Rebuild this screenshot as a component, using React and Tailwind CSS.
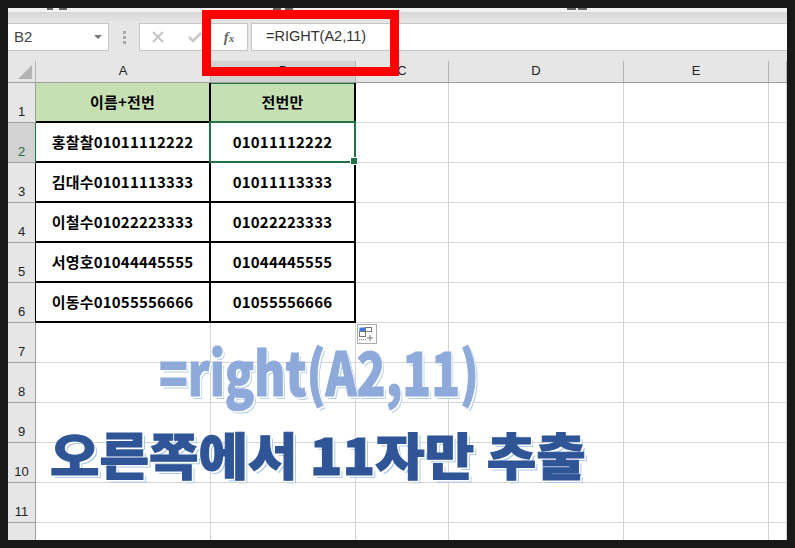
import React from 'react';

const uiFont = "font-['Liberation_Sans','Noto_Sans_CJK_KR',sans-serif]";

// column widths of the sheet
const columns = [
  { label: 'A', width: 'w-[175px]' },
  { label: 'B', width: 'w-[145px]', active: true },
  { label: 'C', width: 'w-[93px]' },
  { label: 'D', width: 'w-[175px]' },
  { label: 'E', width: 'w-[145px]' },
  { label: '', width: 'flex-1' },
];

const rows = [
  ['이름+전번', '전번만'],
  ['홍찰찰01011112222', '01011112222'],
  ['김대수01011113333', '01011113333'],
  ['이철수01022223333', '01022223333'],
  ['서영호01044445555', '01044445555'],
  ['이동수01055556666', '01055556666'],
  ['', ''],
  ['', ''],
  ['', ''],
  ['', ''],
  ['', ''],
  ['', ''],
];

// bits of the ribbon text that show at the very top
const ribbonBits = ['left-[39px] w-[6px]', 'left-[51px] w-[8px]', 'left-[265px] w-[8px]', 'left-[277px] w-[8px]', 'left-[559px] w-[9px]', 'left-[570px] w-[9px]'];

function FormulaBar() {
  return (
    <div className="h-[28px] flex items-stretch bg-[#e6e6e6]">
      <div className="w-[101px] bg-white border border-l-0 border-[#c6c6c6] flex items-center justify-between pl-[6px] pr-[6px]">
        <span className="text-[15px] text-[#444]">B2</span>
        <span className="w-0 h-0 border-x-[4px] border-x-transparent border-t-[4px] border-t-[#777]" />
      </div>
      <div className="w-[30px] flex flex-col items-center justify-center gap-[2px]">
        <span className="w-[3px] h-[3px] bg-[#aaa]" />
        <span className="w-[3px] h-[3px] bg-[#aaa]" />
        <span className="w-[3px] h-[3px] bg-[#aaa]" />
      </div>
      <div className="w-[72px] bg-white border border-r-0 border-[#c6c6c6] flex items-center pl-[12px] gap-[24px]">
        <svg width="12" height="12" viewBox="0 0 12 12" fill="none" stroke="#c4c4c4" strokeWidth="2">
          <path d="M1 1l10 10M11 1L1 11" />
        </svg>
        <svg width="14" height="12" viewBox="0 0 14 12" fill="none" stroke="#c8c8c8" strokeWidth="2.5">
          <path d="M1 6l4 4 8-8" />
        </svg>
      </div>
      <div className="w-[37px] bg-white border border-l-0 border-[#c6c6c6] flex items-center justify-center">
        <span className="font-['Liberation_Serif',serif] italic font-bold text-[15px] text-[#666]">
          f<span className="text-[11px]">x</span>
        </span>
      </div>
      <div className="w-[3px]" />
      <div className="flex-1 bg-white border-y border-l border-[#c6c6c6] pl-[14px] flex items-center text-[14.5px] text-[#333]">
        =RIGHT(A2,11)
      </div>
    </div>
  );
}

function ColumnHeader() {
  return (
    <div className="h-[32px] flex items-end bg-[#e6e6e6] border-b border-[#9f9f9f]">
      <div className="w-[28px] h-[21px] flex items-end justify-end border-r border-[#b4b4b4]">
        <span className="mr-[3px] mb-[3px] w-0 h-0 border-l-[14px] border-l-transparent border-b-[14px] border-b-[#b4b4b4]" />
      </div>
      {columns.map((col, i) => (
        <div
          key={i}
          className={`${col.width} h-[21px] pb-[2px] flex items-center justify-center text-[13px] text-[#222] border-r border-[#b4b4b4] ${col.active ? 'bg-[#d2d2d2]' : ''}`}
        >
          {col.label}
        </div>
      ))}
    </div>
  );
}

function SheetRow({ index, cells }) {
  const inTable = index < 6;
  const isHead = index === 0;
  const isActive = index === 1;

  let headBorder = 'border-r-[#9f9f9f]';
  if (isActive) headBorder = 'border-r-[#217346]';
  else if (inTable && !isHead) headBorder = 'border-r-black';

  return (
    <div className="flex shrink-0 h-[40px]">
      <div
        className={`w-[28px] shrink-0 flex items-end justify-center pb-[1px] text-[13px] border-r border-b border-b-[#9f9f9f] ${headBorder} ${isActive ? 'bg-[#d2d2d2] text-[#1f6b45]' : 'bg-[#e6e6e6] text-[#222]'}`}
      >
        {index < 11 ? index + 1 : ''}
      </div>
      {columns.map((col, c) => {
        const boxed = inTable && c < 2;
        return (
          <div
            key={c}
            className={`${col.width} relative flex items-center justify-center font-['Noto_Sans_CJK_KR',sans-serif] font-bold text-[15px] tracking-[0.2px] text-black ${
              boxed
                ? `border-b-2 border-r-2 border-black ${isHead ? 'bg-[#c6e0b4]' : 'bg-white'}`
                : 'bg-white border-b border-r border-[#d4d4d4]'
            }`}
          >
            {cells[c]}
            {isHead && c === 1 && <span className="absolute left-0 right-0 -top-[1px] h-[2px] bg-[#217346]" />}
            {isActive && c === 1 && (
              <div className="absolute z-10 -left-[2px] -top-[2px] -right-[2px] -bottom-[2px] border-2 border-[#217346]">
                <span className="absolute -right-[3px] -bottom-[3px] w-[6px] h-[6px] bg-[#217346] outline outline-white" />
              </div>
            )}
          </div>
        );
      })}
    </div>
  );
}

export default function App() {
  return (
    <div className={`w-[795px] h-[548px] bg-[#181818] p-[8px] overflow-hidden ${uiFont}`}>
      <div className="relative h-[532px] bg-white overflow-hidden flex flex-col">
        {/* ribbon edge */}
        <div className="h-[15px] shrink-0 flex flex-col">
          <div className="h-[4px] bg-[#f2f2f2]" />
          <div className="flex-1 bg-gradient-to-b from-[#d8d8d8] to-[#e6e6e6]" />
        </div>
        <FormulaBar />
        <ColumnHeader />
        <div className="flex-1 overflow-hidden">
          {rows.map((cells, i) => (
            <SheetRow key={i} index={i} cells={cells} />
          ))}
        </div>

        {ribbonBits.map((pos) => (
          <span key={pos} className={`absolute top-0 h-[2px] bg-[#666] ${pos}`} />
        ))}

        {/* paste options button */}
        <div className="absolute z-20 left-[349px] top-[316px] w-[20px] h-[20px] bg-white border border-[#aaa] flex items-center justify-center">
          <svg width="16" height="14" viewBox="0 0 16 14" fill="none">
            <rect x="0.5" y="0.5" width="6" height="4" fill="#3b78f0" />
            <rect x="0.5" y="4.5" width="6" height="5" stroke="#777" />
            <rect x="6.5" y="0.5" width="6" height="4" stroke="#777" />
            <path d="M0 12.5h7" stroke="#777" strokeDasharray="1 1" />
            <path d="M11 8v6M8 11h6" stroke="#777" />
          </svg>
        </div>

        {/* caption overlay */}
        <div className="absolute z-20 left-[151px] top-[332px] origin-left scale-x-[.79] whitespace-nowrap font-['Noto_Sans_CJK_KR',sans-serif] font-black text-[60px] leading-none text-[#8eaadb] [-webkit-text-stroke:1px_#8eaadb] [text-shadow:2px_2px_0_#fff,3px_3px_0_#b4cfee]">
          =right(A2,11)
        </div>
        <div className="absolute z-20 left-[42px] top-[420px] origin-left scale-x-[1.076] whitespace-nowrap font-['Noto_Sans_CJK_KR',sans-serif] font-black text-[50px] leading-none text-[#2f5597] [-webkit-text-stroke:1px_#2f5597] [text-shadow:2px_2px_0_#fff,3px_3px_0_#a9c8ea]">
          오른쪽에서 11자만 추출
        </div>

        {/* red highlight around the formula */}
        <div className="absolute z-20 left-[194px] top-[2px] w-[197px] h-[66px] border-[9px] border-[#ff0000]" />
      </div>
    </div>
  );
}
